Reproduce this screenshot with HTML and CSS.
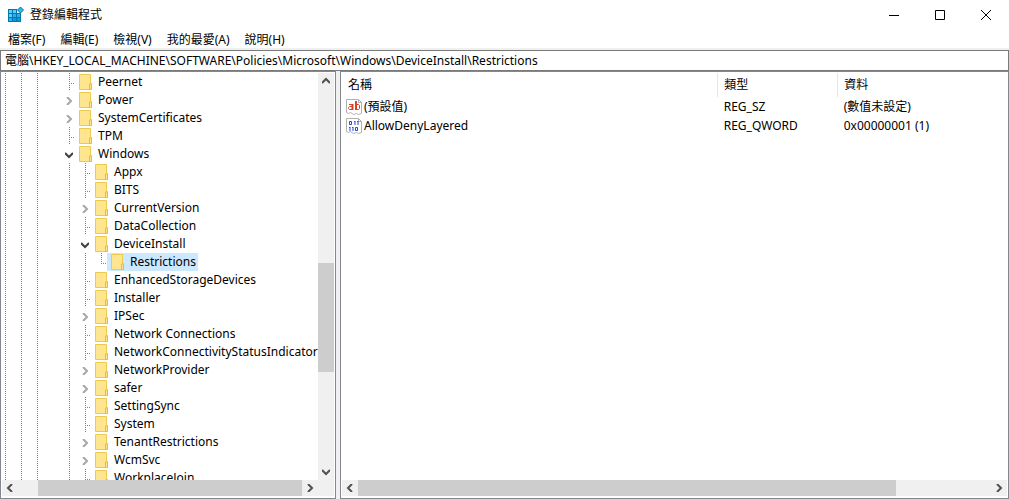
FILE: index.html
```
<!DOCTYPE html>
<html lang="zh-Hant">
<head>
    <meta charset="UTF-8">
    <meta name="viewport" content="width=device-width, initial-scale=1.0">
    <title>登錄編輯程式</title>
    <link rel="stylesheet" href="styles.css">
</head>
<body>
    <!-- Shared icons -->
    <svg class="sprite" aria-hidden="true">
        <symbol id="folder" viewBox="0 0 13 16">
            <path d="M.5.5h11v9h1v6H.5z" fill="#ffe590" stroke="#edc94c"/>
            <path d="M10.5 15.500v-5.500h2v5.500z" fill="#ffe590" stroke="#e8bc38"/>
        </symbol>
        <symbol id="chevron" viewBox="0 0 8 8">
            <path d="M2 0l4 4-4 4" fill="none" stroke="currentColor" stroke-width="2"/>
        </symbol>
        <symbol id="page" viewBox="0 0 16 16">
            <path d="M.5.5h12l3 3v11l-3 1-2-1-3 1-3-2-2 1-2-1z" fill="#fff" stroke="#b0b0b0"/>
            <path d="M12.500.5v3h3" fill="none" stroke="#b0b0b0"/>
        </symbol>
    </svg>

    <!-- Title bar -->
    <header class="titlebar">
        <svg class="app-icon" viewBox="0 0 16 16" aria-hidden="true">
            <path d="M0 2h9v4h4v9H0z" fill="#0078b0"/>
            <path d="M1 3h3v3H1zM5 3h3v3H5zM1 7h3v3H1z" fill="#5ccdf8"/>
            <path d="M5 7h3v3H5zM9 7h3v3H9zM1 11h3v3H1z" fill="#2cb0ea"/>
            <path d="M5 11h3v3H5zM9 11h3v3H9z" fill="#1494d4"/>
            <path d="M12.500 0L15.500 3l-3 3-3-3z" fill="#36b6ee" stroke="#0078b0"/>
        </svg>
        <h1 class="title">登錄編輯程式</h1>
        <div class="window-buttons">
            <button type="button" aria-label="最小化">
                <svg viewBox="0 0 10 10"><path d="M0 5.500h10"/></svg>
            </button>
            <button type="button" aria-label="最大化">
                <svg viewBox="0 0 10 10"><path d="M.5.5h9v9h-9z"/></svg>
            </button>
            <button type="button" aria-label="關閉">
                <svg viewBox="0 0 10 10"><path d="M0 0l10 10M10 0L0 10"/></svg>
            </button>
        </div>
    </header>

    <!-- Menu -->
    <nav class="menubar">
        <button type="button">檔案(F)</button>
        <button type="button">編輯(E)</button>
        <button type="button">檢視(V)</button>
        <button type="button">我的最愛(A)</button>
        <button type="button">說明(H)</button>
    </nav>

    <input class="address" type="text" aria-label="位址" value="電腦\HKEY_LOCAL_MACHINE\SOFTWARE\Policies\Microsoft\Windows\DeviceInstall\Restrictions">

    <main class="panes">
        <!-- Key tree -->
        <section class="pane">
            <div class="view">
                <ul class="tree">
                    <li><div class="row"><span class="leaf"></span><a href="#"><svg class="folder"><use href="#folder"/></svg>Peernet</a></div></li>
                    <li><div class="row"><button type="button" class="toggle" aria-label="展開 Power"><svg><use href="#chevron"/></svg></button><a href="#"><svg class="folder"><use href="#folder"/></svg>Power</a></div></li>
                    <li><div class="row"><button type="button" class="toggle" aria-label="展開 SystemCertificates"><svg><use href="#chevron"/></svg></button><a href="#"><svg class="folder"><use href="#folder"/></svg>SystemCertificates</a></div></li>
                    <li><div class="row"><span class="leaf"></span><a href="#"><svg class="folder"><use href="#folder"/></svg>TPM</a></div></li>
                    <li>
                        <div class="row"><button type="button" class="toggle open" aria-label="收合 Windows"><svg><use href="#chevron"/></svg></button><a href="#"><svg class="folder"><use href="#folder"/></svg>Windows</a></div>
                        <ul>
                            <li><div class="row"><span class="leaf"></span><a href="#"><svg class="folder"><use href="#folder"/></svg>Appx</a></div></li>
                            <li><div class="row"><span class="leaf"></span><a href="#"><svg class="folder"><use href="#folder"/></svg>BITS</a></div></li>
                            <li><div class="row"><button type="button" class="toggle" aria-label="展開 CurrentVersion"><svg><use href="#chevron"/></svg></button><a href="#"><svg class="folder"><use href="#folder"/></svg>CurrentVersion</a></div></li>
                            <li><div class="row"><span class="leaf"></span><a href="#"><svg class="folder"><use href="#folder"/></svg>DataCollection</a></div></li>
                            <li>
                                <div class="row"><button type="button" class="toggle open" aria-label="收合 DeviceInstall"><svg><use href="#chevron"/></svg></button><a href="#"><svg class="folder"><use href="#folder"/></svg>DeviceInstall</a></div>
                                <ul>
                                    <li><div class="row"><span class="leaf last"></span><a href="#" class="selected"><svg class="folder"><use href="#folder"/></svg>Restrictions</a></div></li>
                                </ul>
                            </li>
                            <li><div class="row"><span class="leaf"></span><a href="#"><svg class="folder"><use href="#folder"/></svg>EnhancedStorageDevices</a></div></li>
                            <li><div class="row"><span class="leaf"></span><a href="#"><svg class="folder"><use href="#folder"/></svg>Installer</a></div></li>
                            <li><div class="row"><button type="button" class="toggle" aria-label="展開 IPSec"><svg><use href="#chevron"/></svg></button><a href="#"><svg class="folder"><use href="#folder"/></svg>IPSec</a></div></li>
                            <li><div class="row"><span class="leaf"></span><a href="#"><svg class="folder"><use href="#folder"/></svg>Network Connections</a></div></li>
                            <li><div class="row"><span class="leaf"></span><a href="#"><svg class="folder"><use href="#folder"/></svg>NetworkConnectivityStatusIndicator</a></div></li>
                            <li><div class="row"><button type="button" class="toggle" aria-label="展開 NetworkProvider"><svg><use href="#chevron"/></svg></button><a href="#"><svg class="folder"><use href="#folder"/></svg>NetworkProvider</a></div></li>
                            <li><div class="row"><button type="button" class="toggle" aria-label="展開 safer"><svg><use href="#chevron"/></svg></button><a href="#"><svg class="folder"><use href="#folder"/></svg>safer</a></div></li>
                            <li><div class="row"><span class="leaf"></span><a href="#"><svg class="folder"><use href="#folder"/></svg>SettingSync</a></div></li>
                            <li><div class="row"><span class="leaf"></span><a href="#"><svg class="folder"><use href="#folder"/></svg>System</a></div></li>
                            <li><div class="row"><button type="button" class="toggle" aria-label="展開 TenantRestrictions"><svg><use href="#chevron"/></svg></button><a href="#"><svg class="folder"><use href="#folder"/></svg>TenantRestrictions</a></div></li>
                            <li><div class="row"><button type="button" class="toggle" aria-label="展開 WcmSvc"><svg><use href="#chevron"/></svg></button><a href="#"><svg class="folder"><use href="#folder"/></svg>WcmSvc</a></div></li>
                            <li><div class="row"><span class="leaf"></span><a href="#"><svg class="folder"><use href="#folder"/></svg>WorkplaceJoin</a></div></li>
                        </ul>
                    </li>
                </ul>
            </div>
            <div class="scrollbar vertical">
                <button type="button" class="up" aria-label="向上"><svg><use href="#chevron"/></svg></button>
                <div class="track"><div class="thumb" style="margin-top: 174px; height: 29%"></div></div>
                <button type="button" class="down" aria-label="向下"><svg><use href="#chevron"/></svg></button>
            </div>
            <div class="scrollbar horizontal">
                <button type="button" class="left" aria-label="向左"><svg><use href="#chevron"/></svg></button>
                <div class="track"><div class="thumb" style="margin-left: 7%; width: 93%"></div></div>
                <button type="button" class="right" aria-label="向右"><svg><use href="#chevron"/></svg></button>
            </div>
            <div class="corner"></div>
        </section>

        <!-- Values -->
        <section class="pane">
            <div class="view">
                <table class="values">
                    <thead>
                        <tr><th class="name">名稱</th><th class="type">類型</th><th>資料</th></tr>
                    </thead>
                    <tbody>
                        <tr>
                            <td><div class="value-name">
                                <svg viewBox="0 0 16 16" fill="none" stroke="#d84020">
                                    <use href="#page"/>
                                    <path d="M3 5.500h3" />
                                    <path d="M6.500 5v6" stroke-width="2"/>
                                    <path d="M6 7.500H3.500L2.500 8.500v1l1 1H6"/>
                                    <path d="M10 2v9" stroke-width="2"/>
                                    <path d="M11 5.500h1.500l1 1v3l-1 1H11"/>
                                </svg>
                                (預設值)
                            </div></td>
                            <td>REG_SZ</td>
                            <td>(數值未設定)</td>
                        </tr>
                        <tr>
                            <td><div class="value-name">
                                <svg viewBox="0 0 16 16" fill="none" stroke="#2448d8">
                                    <use href="#page"/>
                                    <path d="M3.500 3.500h2v3h-2zM9.500 9.500h2v3h-2z"/>
                                    <path d="M9 3v4M12 3v4M4 9v4M7 9v4"/>
                                    <path d="M8 3.500h1M11 3.500h1M3 9.500h1M6 9.500h1"/>
                                </svg>
                                AllowDenyLayered
                            </div></td>
                            <td>REG_QWORD</td>
                            <td>0x00000001 (1)</td>
                        </tr>
                    </tbody>
                </table>
            </div>
            <div class="scrollbar horizontal wide">
                <button type="button" class="left" aria-label="向左"><svg><use href="#chevron"/></svg></button>
                <div class="track"><div class="thumb" style="width: 85%"></div></div>
                <button type="button" class="right" aria-label="向右"><svg><use href="#chevron"/></svg></button>
            </div>
        </section>
    </main>
</body>
</html>
```
FILE: styles.css
```
* {
    box-sizing: border-box;
}
body {
    display: flex;
    flex-direction: column;
    height: 100vh;
    margin: 0;
    overflow: hidden;
    background: #f0f0f0;
    color: #000;
    font: 12px/18px "Noto Sans", "Noto Sans CJK TC", sans-serif;
}
button, input {
    margin: 0;
    padding: 0;
    border: none;
    background: none;
    color: inherit;
    font: inherit;
}
.sprite {
    position: absolute;
    width: 0;
    height: 0;
}

/* Title bar */
.titlebar {
    display: flex;
    align-items: center;
    height: 29px;
    padding-left: 8px;
    background: #fff;
}
.app-icon {
    width: 16px;
    height: 16px;
}
.title {
    flex: 1;
    margin: 0 6px;
    font-size: 12px;
    font-weight: normal;
}
.window-buttons {
    display: flex;
    height: 100%;
}
.window-buttons button {
    width: 46px;
    height: 100%;
}
.window-buttons svg {
    display: block;
    width: 10px;
    height: 10px;
    margin: 0 auto;
    fill: none;
    stroke: #000;
}
.window-buttons button:hover {
    background: #e5e5e5;
}

/* Menu */
.menubar {
    display: flex;
    height: 19px;
    background: #fff;
}
.menubar button {
    height: 19px;
    padding: 2px 7px 0 8px;
    line-height: 17px;
}
.menubar button:hover {
    background: #e5f3ff;
}
.address {
    width: 100%;
    height: 21px;
    margin-top: 2px;
    padding: 0 4px 2px;
    border: 1px solid #7a7a7a;
    background: #fff;
}

/* Panes */
.panes {
    flex: 1;
    display: grid;
    grid-template-columns: 33.3% 1fr;
    gap: 4px;
    min-height: 0;
}
.pane {
    display: grid;
    grid-template-columns: 1fr auto;
    grid-template-rows: 1fr auto;
    min-width: 0;
    min-height: 0;
    padding: 1px 1px 2px;
    border: 1px solid #828790;
    background: #fff;
}
.view {
    min-width: 0;
    min-height: 0;
    overflow: hidden;
}

/* Tree, each level is 16px wide with a dotted line through the toggle */
.tree, .tree ul {
    margin: 0;
    padding: 0;
    list-style: none;
}
.tree {
    --dots: repeating-linear-gradient(#808080 0 1px, transparent 1px 2px);
    padding-left: 59px;
    background-image: var(--dots), var(--dots), var(--dots);
    background-position: 3px 0, 19px 0, 35px 0;
    background-size: 1px 100%;
    background-repeat: no-repeat;
}
.tree ul {
    padding-left: 16px;
    background: var(--dots) 8px 0 / 1px 100% no-repeat;
}
.row {
    display: flex;
    height: 18px;
    white-space: nowrap;
}
.leaf, .toggle {
    flex: none;
    width: 14px;
    height: 18px;
}
.leaf {
    background:
        var(--dots) 8px 0 / 1px 100% no-repeat,
        repeating-linear-gradient(90deg, #808080 0 1px, transparent 1px 2px) 8px 10px / 6px 1px no-repeat;
}
.leaf.last {
    background-size: 1px 10px, 6px 1px;
}
.toggle {
    padding: 2px 0 0 4px;
    color: #a6a6a6;
}
.toggle svg {
    display: block;
    width: 8px;
    height: 8px;
}
.toggle.open {
    color: #404040;
}
.toggle.open svg {
    transform: rotate(90deg);
}
.row a {
    display: flex;
    align-items: center;
    gap: 6px;
    padding: 0 2px 0 4px;
    color: inherit;
    text-decoration: none;
}
.row a.selected {
    background: #cce8ff;
}
.folder {
    width: 13px;
    height: 16px;
}

/* Values */
.values {
    width: 100%;
    table-layout: fixed;
    border-collapse: collapse;
    text-align: left;
}
.values th {
    height: 24px;
    padding: 0 6px;
    border-right: 1px solid #e5e5e5;
    font-weight: normal;
}
.values th:last-child {
    border-right: none;
}
.values .name {
    width: 56.5%;
}
.values .type {
    width: 120px;
}
.values td {
    height: 19px;
    padding: 0 6px;
}
.values td:first-child {
    padding-left: 4px;
}
.value-name {
    display: flex;
    align-items: center;
    gap: 2px;
}
.value-name svg {
    width: 16px;
    height: 16px;
}

/* Scrollbars */
.scrollbar {
    display: flex;
    background: #f0f0f0;
}
.scrollbar button {
    display: grid;
    place-items: center;
    flex: none;
    width: 16px;
    height: 16px;
    color: #505050;
}
.scrollbar svg {
    width: 8px;
    height: 8px;
}
.scrollbar.vertical {
    flex-direction: column;
    width: 16px;
}
.scrollbar.wide {
    grid-column: 1 / -1;
}
.corner {
    background: #f0f0f0;
}
.track {
    flex: 1;
}
.thumb {
    height: 100%;
    background: #cdcdcd;
}
.up svg {
    transform: rotate(-90deg);
}
.down svg {
    transform: rotate(90deg);
}
.left svg {
    transform: rotate(180deg);
}
```
